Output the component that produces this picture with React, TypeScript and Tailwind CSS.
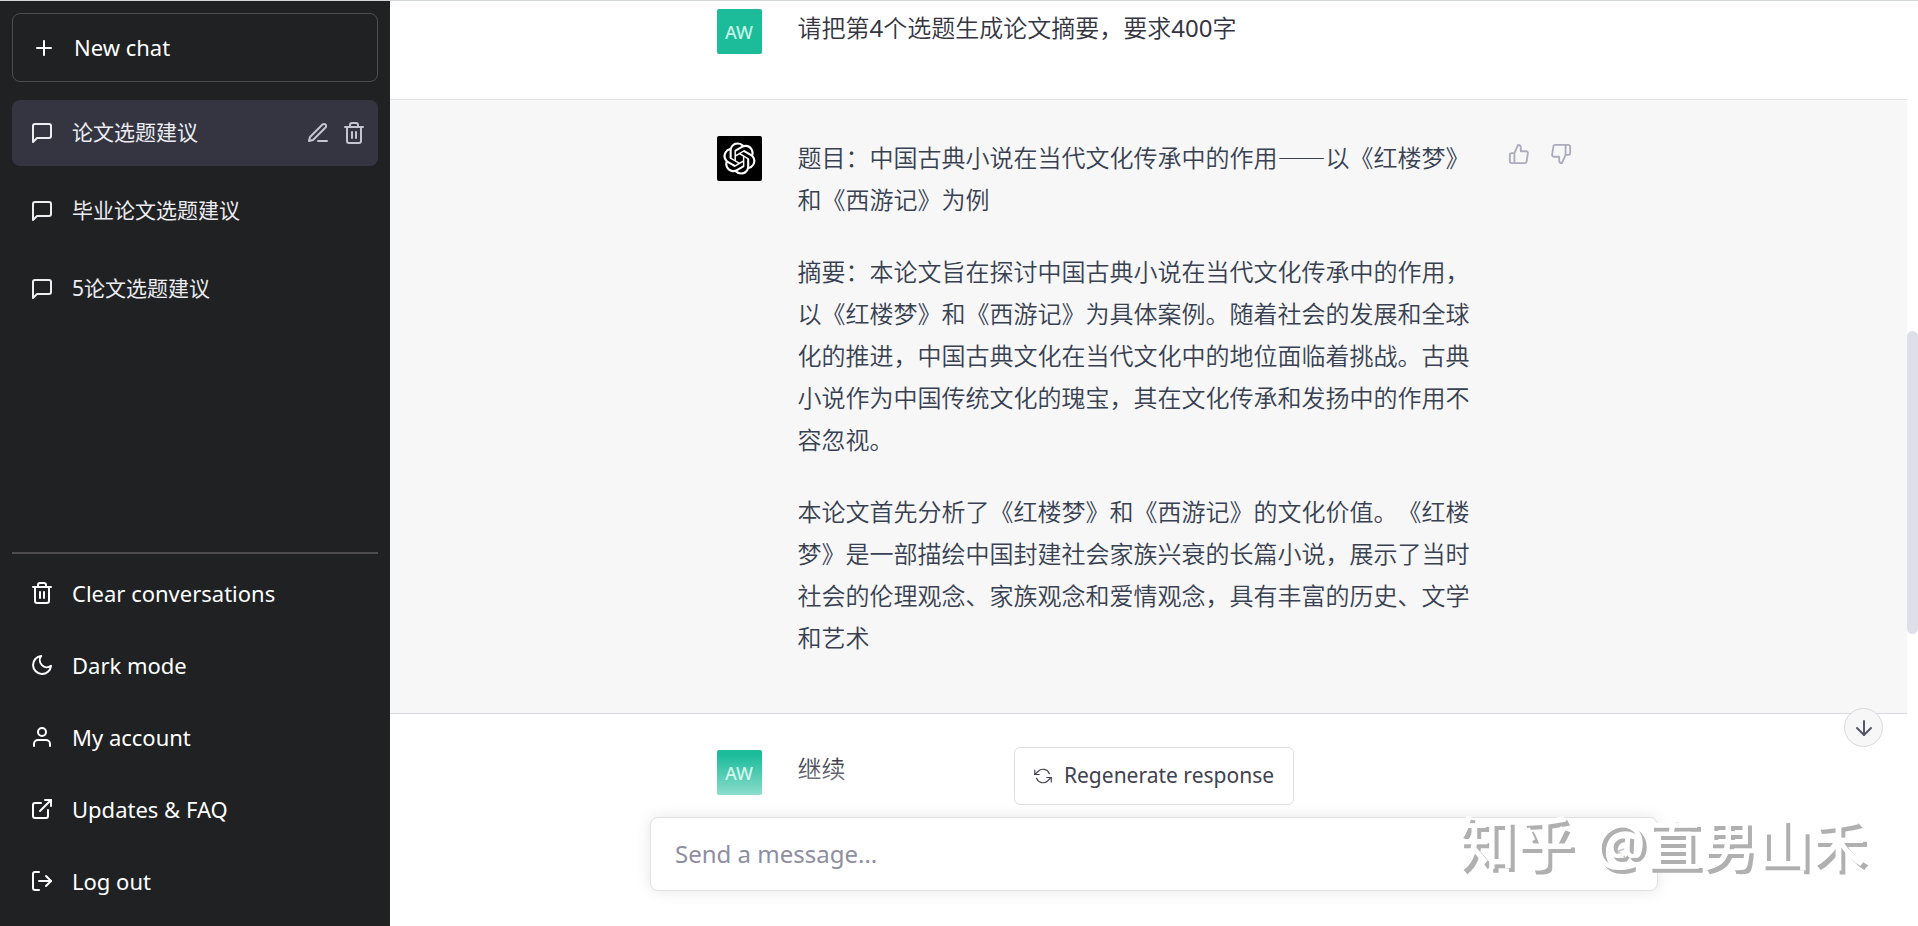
import React from "react";
import { FiMessageSquare, FiTrash2, FiMoon, FiUser, FiExternalLink, FiLogOut, FiPlus, FiThumbsUp, FiThumbsDown, FiArrowDown, FiSend } from "react-icons/fi";

const chats = ["论文选题建议", "毕业论文选题建议", "5论文选题建议"];

const links = [
  { label: "Clear conversations", Icon: FiTrash2 },
  { label: "Dark mode", Icon: FiMoon },
  { label: "My account", Icon: FiUser },
  { label: "Updates & FAQ", Icon: FiExternalLink },
  { label: "Log out", Icon: FiLogOut },
];

const answer = [
  "题目：中国古典小说在当代文化传承中的作用——以《红楼梦》和《西游记》为例",
  "摘要：本论文旨在探讨中国古典小说在当代文化传承中的作用，以《红楼梦》和《西游记》为具体案例。随着社会的发展和全球化的推进，中国古典文化在当代文化中的地位面临着挑战。古典小说作为中国传统文化的瑰宝，其在文化传承和发扬中的作用不容忽视。",
  "本论文首先分析了《红楼梦》和《西游记》的文化价值。《红楼梦》是一部描绘中国封建社会家族兴衰的长篇小说，展示了当时社会的伦理观念、家族观念和爱情观念，具有丰富的历史、文学和艺术",
];

function EditIcon() {
  return (
    <svg viewBox="0 0 24 24" className="size-6" fill="none" stroke="currentColor" strokeWidth="2" strokeLinecap="round" strokeLinejoin="round">
      <path d="M12 20h9" />
      <path d="M16.5 3.5a2.121 2.121 0 0 1 3 3L7 19l-4 1 1-4L16.5 3.5z" />
    </svg>
  );
}

function RefreshIcon() {
  return (
    <svg viewBox="0 0 24 24" className="size-[18px]" fill="none" stroke="currentColor" strokeWidth="1.5" strokeLinecap="round" strokeLinejoin="round">
      <path d="M1 4v6h6" />
      <path d="M23 20v-6h-6" />
      <path d="M20.49 9A9 9 0 0 0 5.64 5.64L1 10" />
      <path d="M23 14l-4.64 4.36A9 9 0 0 1 3.51 15" />
    </svg>
  );
}

function LogoIcon() {
  return (
    <svg viewBox="0 0 41 41" className="size-[33px]" fill="currentColor">
      <path d="M37.532 16.871a9.963 9.963 0 0 0-.856-8.184 10.078 10.078 0 0 0-10.855-4.835A9.964 9.964 0 0 0 18.306.5a10.079 10.079 0 0 0-9.614 6.977 9.967 9.967 0 0 0-6.664 4.834 10.080 10.080 0 0 0 1.240 11.817 9.965 9.965 0 0 0 .856 8.185 10.079 10.079 0 0 0 10.855 4.835 9.965 9.965 0 0 0 7.516 3.350 10.078 10.078 0 0 0 9.617-6.981 9.967 9.967 0 0 0 6.663-4.834 10.079 10.079 0 0 0-1.243-11.813zM22.498 37.886a7.474 7.474 0 0 1-4.799-1.735c.061-.033.168-.091.237-.134l7.964-4.600a1.294 1.294 0 0 0 .655-1.134V19.054l3.366 1.944a.12.12 0 0 1 .066.092v9.299a7.505 7.505 0 0 1-7.490 7.496zM6.392 31.006a7.471 7.471 0 0 1-.894-5.023c.060.036.162.099.237.141l7.964 4.600a1.297 1.297 0 0 0 1.308 0l9.724-5.614v3.888a.12.12 0 0 1-.048.103l-8.051 4.649a7.504 7.504 0 0 1-10.240-2.744zM4.297 13.620A7.469 7.469 0 0 1 8.200 10.333c0 .068-.004.190-.004.274v9.201a1.294 1.294 0 0 0 .654 1.132l9.723 5.614-3.366 1.944a.12.12 0 0 1-.114.010L7.040 23.856a7.504 7.504 0 0 1-2.743-10.237zm27.658 6.437-9.724-5.615 3.367-1.943a.121.121 0 0 1 .113-.010l8.052 4.648a7.498 7.498 0 0 1-1.158 13.528v-9.476a1.293 1.293 0 0 0-.650-1.132zm3.350-5.043c-.059-.037-.162-.099-.236-.141l-7.965-4.600a1.298 1.298 0 0 0-1.308 0l-9.723 5.614v-3.888a.12.12 0 0 1 .048-.103l8.050-4.645a7.497 7.497 0 0 1 11.135 7.763zm-21.063 6.929-3.367-1.944a.12.12 0 0 1-.065-.092v-9.299a7.497 7.497 0 0 1 12.293-5.756 6.940 6.940 0 0 0-.236.134l-7.965 4.600a1.294 1.294 0 0 0-.654 1.132l-.006 11.225zm1.829-3.943 4.330-2.501 4.332 2.500v5l-4.331 2.500-4.331-2.500V18z" />
    </svg>
  );
}

function Sidebar() {
  return (
    <aside className="flex w-[390px] shrink-0 flex-col bg-[#202123] px-3 py-3 text-white">
      <button className="flex h-[69px] shrink-0 items-center gap-[18px] rounded-lg border border-[#4d4d4f] px-[19px] text-[22px]">
        <FiPlus className="size-6" />
        New chat
      </button>
      <ul className="mt-[18px] flex flex-1 flex-col gap-3 text-[21px]">
        {chats.map((title, i) => (
          <li key={title} className={i === 0 ? "flex h-[66px] items-center rounded-lg bg-[#343541] pr-3 text-[#ececf1]" : "flex h-[66px] items-center rounded-lg pr-3 text-[#ececf1]"}>
            <a href="#" className="flex flex-1 items-center gap-[18px] pl-[18px]">
              <FiMessageSquare className="size-6" />
              {title}
            </a>
            {i === 0 && (
              <span className="flex gap-3 text-[#c5c5d2]">
                <button aria-label="Rename chat"><EditIcon /></button>
                <button aria-label="Delete chat"><FiTrash2 className="size-6" /></button>
              </span>
            )}
          </li>
        ))}
      </ul>
      <nav className="flex flex-col gap-[6px] border-t-2 border-[#4d4d4f] pt-[6px] text-[22px]">
        {links.map(({ label, Icon }) => (
          <a key={label} href="#" className="flex h-[66px] items-center gap-[18px] px-[18px]">
            <Icon className="size-6" />
            {label}
          </a>
        ))}
      </nav>
    </aside>
  );
}

function UserAvatar() {
  return <div className="flex size-[45px] shrink-0 items-center justify-center rounded-xs bg-[#1cbc9b] text-lg font-medium text-[#c4f3e6]">AW</div>;
}

function UserMessage({ children }: { children: React.ReactNode }) {
  return (
    <div className="mx-auto flex max-w-[912px] gap-9 px-6">
      <UserAvatar />
      <p className="leading-[38px] font-[350] text-[#343541]">{children}</p>
    </div>
  );
}

export default function App() {
  return (
    <div className="flex h-screen overflow-hidden border-t border-[#d5d8d8] bg-white font-['Noto_Sans','Noto_Sans_CJK_SC',sans-serif]">
      <Sidebar />
      <main className="relative flex min-w-0 flex-1">
        <div lang="zh-CN" className="min-w-0 flex-1 overflow-hidden text-2xl [text-spacing-trim:space-all]">
          <section className="border-b border-[#e2e2e3] pt-2 pb-[45px]">
            <UserMessage>
              请把第<span className="font-normal">4</span>个选题生成论文摘要，要求<span className="font-normal">400</span>字
            </UserMessage>
          </section>
          <section className="border-b border-[#d9d9e0] bg-[#f7f7f8] pt-9 pb-[55px]">
            <div className="mx-auto flex max-w-[912px] gap-9 px-6">
              <div className="flex size-[45px] shrink-0 items-center justify-center rounded-xs bg-black text-white">
                <LogoIcon />
              </div>
              <div className="flex flex-1 flex-col gap-[30px] font-['Noto_Sans_CJK_SC',sans-serif] leading-[42px] font-[350] text-[#374151]">
                {answer.map((p) => (
                  <p key={p}>{p}</p>
                ))}
              </div>
              <div className="flex gap-5 self-start pt-[7px] pr-[9px] text-[#acacbe]">
                <button aria-label="Good answer"><FiThumbsUp className="size-[22px]" /></button>
                <button aria-label="Bad answer"><FiThumbsDown className="size-[22px]" /></button>
              </div>
            </div>
          </section>
          <section className="pt-9">
            <UserMessage>继续</UserMessage>
          </section>
        </div>
        <div className="w-[11px] shrink-0 bg-white pt-[330px]">
          <div className="h-[303px] rounded-full bg-[#dfdfe9]" />
        </div>

        <div className="absolute inset-x-0 bottom-0 flex flex-col items-center bg-linear-to-b from-transparent from-14% to-white to-55% px-6 pt-5 pb-[35px]">
          <button className="flex h-[58px] items-center gap-3 rounded-md border border-[#dedee3] bg-white px-[19px] text-[21px] text-[#40414f]">
            <RefreshIcon />
            Regenerate response
          </button>
          <form className="mt-3 flex h-[74px] w-full max-w-[1008px] items-center rounded-lg border border-[#e2e2e4] bg-white px-6 shadow-[0_0_15px_rgba(0,0,0,0.1)]">
            <input aria-label="Message" placeholder="Send a message..." className="min-w-0 flex-1 text-2xl outline-none placeholder:text-[#8e8ea0]" />
            <button type="button" aria-label="Send" className="text-[#c5c5d2]"><FiSend className="size-[18px]" /></button>
          </form>
        </div>
        <button aria-label="Scroll to bottom" className="absolute right-[35px] bottom-[179px] flex size-[39px] items-center justify-center rounded-full border border-[#d9d9dd] bg-[#f7f7f8] text-[#565869]">
          <FiArrowDown className="size-6" />
        </button>
        <p className="pointer-events-none absolute right-[52px] bottom-[42px] flex items-baseline gap-5 text-[58px] leading-[80px] font-medium text-white [text-shadow:4px_4px_0_#b0b0b0]">
          <span>知乎</span>
          <span>@<span className="text-[55px]">直男山禾</span></span>
        </p>
      </main>
    </div>
  );
}
